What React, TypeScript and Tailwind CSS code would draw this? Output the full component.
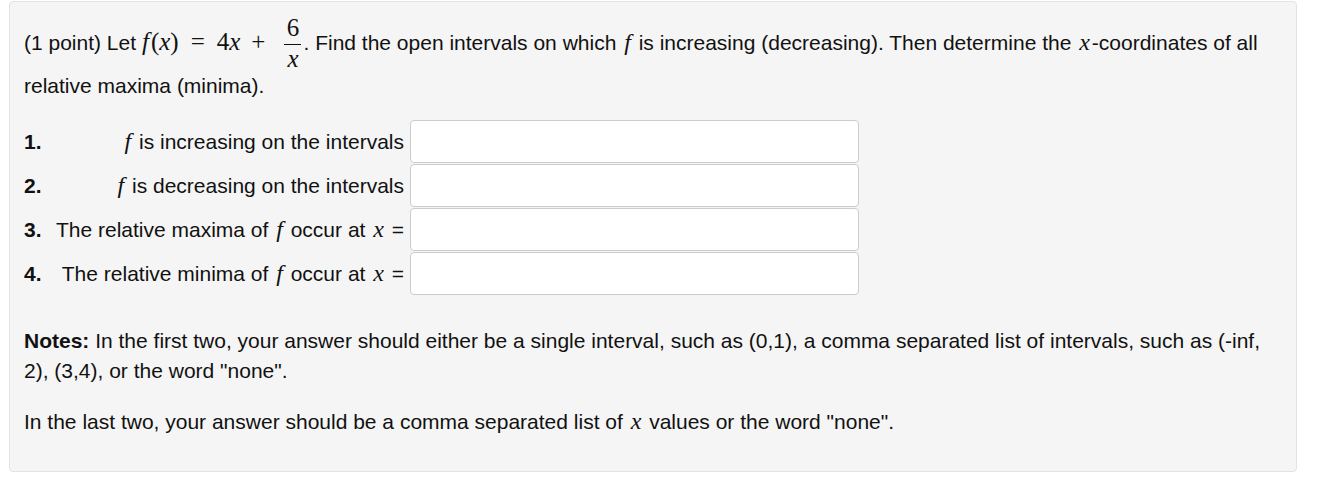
import React from 'react';

const MathI: React.FC<{ children: React.ReactNode }> = ({ children }) => (
  <span className="font-['Liberation_Serif',serif] italic text-[24px] leading-none mx-[2px]">{children}</span>
);

const rows = [
  { n: '1.', label: <><MathI>f</MathI> is increasing on the intervals</> },
  { n: '2.', label: <><MathI>f</MathI> is decreasing on the intervals</> },
  { n: '3.', label: <>The relative maxima of <MathI>f</MathI> occur at <MathI>x</MathI> =</> },
  { n: '4.', label: <>&nbsp;The relative minima of <MathI>f</MathI> occur at <MathI>x</MathI> =</> },
];

export default function App() {
  return (
    <div className="w-[1342px] h-[479px] bg-white font-['Liberation_Sans',Arial,sans-serif] text-[21px] text-[#111]">
      <div className="ml-[9px] mt-px w-[1288px] h-[471px] bg-[#f5f5f5] border border-[#e3e3e3] rounded-[4px] pl-[14px] pr-4">
        <p className="pt-[17px] leading-[32px]">
          (1 point) Let{' '}
          <span className="font-['Liberation_Serif',serif] text-[25px]">
            <i className="mr-[2px]">f</i>(<i>x</i>)<span className="mx-[12px]">=</span>4<i>x</i><span className="mx-[11px]">+</span>
          </span>
          <span className="inline-flex flex-col items-center align-middle font-['Liberation_Serif',serif] text-[25px] leading-[20px] ml-[8px] mr-[2px] relative top-[-1px]">
            <span className="pb-[6px]">6</span>
            <span className="border-t-[1.5px] border-[#111] w-[17px]"></span>
            <span className="italic pt-[4px]">x</span>
          </span>
          . Find the open intervals on which <MathI>f</MathI> is increasing (decreasing). Then determine the <MathI>x</MathI>-coordinates of all relative maxima (minima).
        </p>
        <div className="mt-[18px] flex flex-col gap-px">
          {rows.map(r => (
            <div key={r.n} className="flex items-center h-[43px]">
              <span className="w-[30px] font-bold">{r.n}</span>
              <span className="w-[350px] text-right whitespace-nowrap">{r.label}</span>
              <input className="ml-[6px] w-[449px] h-[43px] bg-white border border-[#ccc] rounded-[4px]" />
            </div>
          ))}
        </div>
        <p className="mt-[31px] leading-[30px]">
          <b>Notes:</b> In the first two, your answer should either be a single interval, such as (0,1), a comma separated list of intervals, such as (-inf, 2), (3,4), or the word "none".
        </p>
        <p className="mt-[21px] leading-[30px]">
          In the last two, your answer should be a comma separated list of <MathI>x</MathI> values or the word "none".
        </p>
      </div>
    </div>
  );
}
